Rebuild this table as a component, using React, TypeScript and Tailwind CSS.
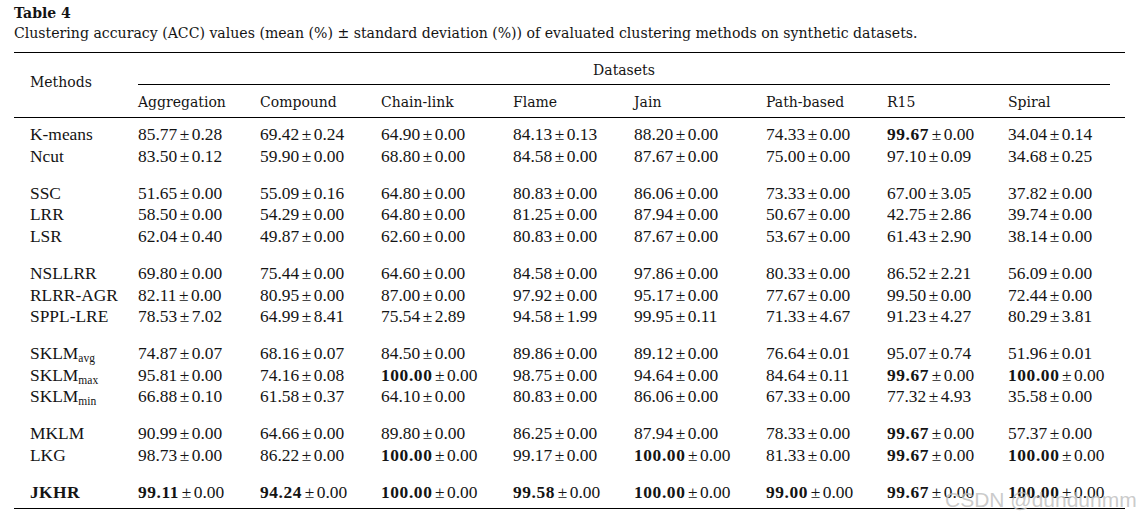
const HEAD_FONT = "font-['DejaVu_Serif',serif]";
const BODY_FONT = "font-['Liberation_Serif','Times_New_Roman',serif]";

const COLUMNS = [
  "Aggregation",
  "Compound",
  "Chain-link",
  "Flame",
  "Jain",
  "Path-based",
  "R15",
  "Spiral",
];

type Method = { name: string; sub?: string; bold?: boolean };
type Row = { method: Method; cells: string[] };

// "!" in front of a value marks the best result (bold)
const GROUPS: Row[][] = [
  [
    {
      method: { name: "K-means" },
      cells: ["85.77|0.28", "69.42|0.24", "64.90|0.00", "84.13|0.13", "88.20|0.00", "74.33|0.00", "!99.67|0.00", "34.04|0.14"],
    },
    {
      method: { name: "Ncut" },
      cells: ["83.50|0.12", "59.90|0.00", "68.80|0.00", "84.58|0.00", "87.67|0.00", "75.00|0.00", "97.10|0.09", "34.68|0.25"],
    },
  ],
  [
    {
      method: { name: "SSC" },
      cells: ["51.65|0.00", "55.09|0.16", "64.80|0.00", "80.83|0.00", "86.06|0.00", "73.33|0.00", "67.00|3.05", "37.82|0.00"],
    },
    {
      method: { name: "LRR" },
      cells: ["58.50|0.00", "54.29|0.00", "64.80|0.00", "81.25|0.00", "87.94|0.00", "50.67|0.00", "42.75|2.86", "39.74|0.00"],
    },
    {
      method: { name: "LSR" },
      cells: ["62.04|0.40", "49.87|0.00", "62.60|0.00", "80.83|0.00", "87.67|0.00", "53.67|0.00", "61.43|2.90", "38.14|0.00"],
    },
  ],
  [
    {
      method: { name: "NSLLRR" },
      cells: ["69.80|0.00", "75.44|0.00", "64.60|0.00", "84.58|0.00", "97.86|0.00", "80.33|0.00", "86.52|2.21", "56.09|0.00"],
    },
    {
      method: { name: "RLRR-AGR" },
      cells: ["82.11|0.00", "80.95|0.00", "87.00|0.00", "97.92|0.00", "95.17|0.00", "77.67|0.00", "99.50|0.00", "72.44|0.00"],
    },
    {
      method: { name: "SPPL-LRE" },
      cells: ["78.53|7.02", "64.99|8.41", "75.54|2.89", "94.58|1.99", "99.95|0.11", "71.33|4.67", "91.23|4.27", "80.29|3.81"],
    },
  ],
  [
    {
      method: { name: "SKLM", sub: "avg" },
      cells: ["74.87|0.07", "68.16|0.07", "84.50|0.00", "89.86|0.00", "89.12|0.00", "76.64|0.01", "95.07|0.74", "51.96|0.01"],
    },
    {
      method: { name: "SKLM", sub: "max" },
      cells: ["95.81|0.00", "74.16|0.08", "!100.00|0.00", "98.75|0.00", "94.64|0.00", "84.64|0.11", "!99.67|0.00", "!100.00|0.00"],
    },
    {
      method: { name: "SKLM", sub: "min" },
      cells: ["66.88|0.10", "61.58|0.37", "64.10|0.00", "80.83|0.00", "86.06|0.00", "67.33|0.00", "77.32|4.93", "35.58|0.00"],
    },
  ],
  [
    {
      method: { name: "MKLM" },
      cells: ["90.99|0.00", "64.66|0.00", "89.80|0.00", "86.25|0.00", "87.94|0.00", "78.33|0.00", "!99.67|0.00", "57.37|0.00"],
    },
    {
      method: { name: "LKG" },
      cells: ["98.73|0.00", "86.22|0.00", "!100.00|0.00", "99.17|0.00", "!100.00|0.00", "81.33|0.00", "!99.67|0.00", "!100.00|0.00"],
    },
  ],
  [
    {
      method: { name: "JKHR", bold: true },
      cells: ["!99.11|0.00", "!94.24|0.00", "!100.00|0.00", "!99.58|0.00", "!100.00|0.00", "!99.00|0.00", "!99.67|0.00", "!100.00|0.00"],
    },
  ],
];

const GRID = "grid grid-cols-[124px_122px_121px_132px_121px_132px_121px_121px_117px]";

function Value({ raw }: { raw: string }) {
  const bold = raw.startsWith("!");
  const [mean, sd] = raw.replace("!", "").split("|");
  return (
    <div className="whitespace-nowrap">
      <span className={bold ? "font-bold tracking-[0.6px]" : ""}>{mean}</span>
      <span className="mx-[2.5px]">±</span>
      <span>{sd}</span>
    </div>
  );
}

export default function App() {
  return (
    <div className="relative w-[1142px] h-[522px] overflow-hidden bg-white text-[#141414] px-[14px] pt-[3px]">
      <div className={`${HEAD_FONT} text-[14px] leading-[20px] font-bold`}>Table 4</div>
      <div className={`${HEAD_FONT} text-[14.1px] leading-[20px]`}>
        Clustering accuracy (ACC) values (mean (%) ± standard deviation (%)) of evaluated clustering methods on
        synthetic datasets.
      </div>

      <div className={`mt-[9px] w-[1111px] border-t border-black ${BODY_FONT} text-[17.4px]`}>
        {/* header */}
        <div className="flex border-b border-black">
          <div className={`w-[124px] pl-4 pt-[19px] leading-[21.7px] ${HEAD_FONT} text-[14px]`}>Methods</div>
          <div className="flex-1 flex flex-col">
            <div className={`h-[31px] pt-[7px] pr-[15px] text-center leading-[21.7px] ${HEAD_FONT} text-[14px]`}>
              Datasets
            </div>
            <div className="h-px bg-black mr-[15px]" />
            <div className="h-[32px] pt-[3px] grid grid-cols-[122px_121px_132px_121px_132px_121px_121px_117px] items-center">
              {COLUMNS.map((c) => (
                <div key={c} className={`${HEAD_FONT} text-[14px] leading-[21.7px]`}>
                  {c}
                </div>
              ))}
            </div>
          </div>
        </div>

        {/* body */}
        <div className="pt-[6px] pb-[4px] border-b border-black">
          {GROUPS.map((group, gi) => (
            <div key={gi} className={gi > 0 ? "mt-[15.2px]" : ""}>
              {group.map((row, ri) => (
                <div key={ri} className={`${GRID} h-[21.7px] leading-[21.7px]`}>
                  <div className={`pl-4 ${row.method.bold ? "font-bold tracking-[0.4px]" : ""}`}>
                    {row.method.name}
                    {row.method.sub && <sub className="text-[11.5px]">{row.method.sub}</sub>}
                  </div>
                  {row.cells.map((c, ci) => (
                    <Value key={ci} raw={c} />
                  ))}
                </div>
              ))}
            </div>
          ))}
        </div>
      </div>

      {/* watermark */}
      <div className="absolute left-[945px] top-[488px] font-['Liberation_Sans',sans-serif] text-[21px] leading-[24px] text-[#bdbdbd]/80 whitespace-nowrap">
        CSDN @dundunmm
      </div>
    </div>
  );
}
